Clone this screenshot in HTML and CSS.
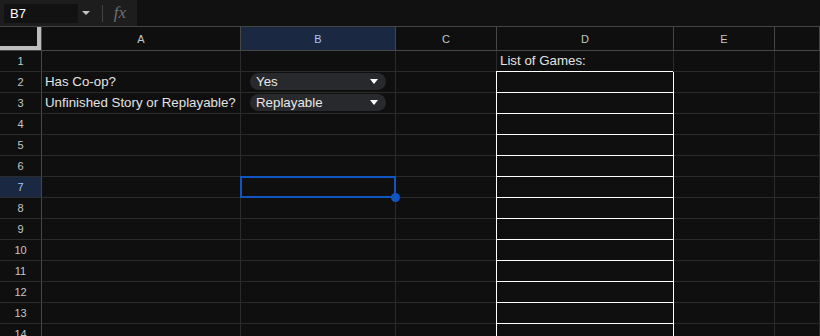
FILE: index.html
```html
<!DOCTYPE html>
<html lang="en">
<head>
    <meta charset="UTF-8">
    <meta name="viewport" content="width=device-width, initial-scale=1.0">
    <title>Sheet</title>
    <link rel="stylesheet" href="styles.css">
</head>
<body>
    <div class="fbar">
        <div class="namebox">B7</div>
        <div class="nb-arrow"></div>
        <div class="sep"></div>
        <div class="fx">fx</div>
        <div class="fedit"></div>
    </div>

    <div class="grid">
        <div class="corner"></div>
        <div class="colh">A</div>
        <div class="colh active">B</div>
        <div class="colh">C</div>
        <div class="colh">D</div>
        <div class="colh">E</div>
        <div class="colh"></div>

        <div class="rowh">1</div>
        <div class="cell"></div><div class="cell"></div><div class="cell"></div>
        <div class="cell">List of Games:</div><div class="cell"></div><div class="cell"></div>

        <div class="rowh">2</div>
        <div class="cell">Has Co-op?</div>
        <div class="cell"><div class="chip">Yes<span class="caret"></span></div></div>
        <div class="cell"></div><div class="cell list"></div><div class="cell"></div><div class="cell"></div>

        <div class="rowh">3</div>
        <div class="cell">Unfinished Story or Replayable?</div>
        <div class="cell"><div class="chip">Replayable<span class="caret"></span></div></div>
        <div class="cell"></div><div class="cell list"></div><div class="cell"></div><div class="cell"></div>

        <div class="rowh">4</div>
        <div class="cell"></div><div class="cell"></div><div class="cell"></div><div class="cell list"></div><div class="cell"></div><div class="cell"></div>
        <div class="rowh">5</div>
        <div class="cell"></div><div class="cell"></div><div class="cell"></div><div class="cell list"></div><div class="cell"></div><div class="cell"></div>
        <div class="rowh">6</div>
        <div class="cell"></div><div class="cell"></div><div class="cell"></div><div class="cell list"></div><div class="cell"></div><div class="cell"></div>
        <div class="rowh active">7</div>
        <div class="cell"></div><div class="cell selected"><span class="handle"></span></div><div class="cell"></div><div class="cell list"></div><div class="cell"></div><div class="cell"></div>
        <div class="rowh">8</div>
        <div class="cell"></div><div class="cell"></div><div class="cell"></div><div class="cell list"></div><div class="cell"></div><div class="cell"></div>
        <div class="rowh">9</div>
        <div class="cell"></div><div class="cell"></div><div class="cell"></div><div class="cell list"></div><div class="cell"></div><div class="cell"></div>
        <div class="rowh">10</div>
        <div class="cell"></div><div class="cell"></div><div class="cell"></div><div class="cell list"></div><div class="cell"></div><div class="cell"></div>
        <div class="rowh">11</div>
        <div class="cell"></div><div class="cell"></div><div class="cell"></div><div class="cell list"></div><div class="cell"></div><div class="cell"></div>
        <div class="rowh">12</div>
        <div class="cell"></div><div class="cell"></div><div class="cell"></div><div class="cell list"></div><div class="cell"></div><div class="cell"></div>
        <div class="rowh">13</div>
        <div class="cell"></div><div class="cell"></div><div class="cell"></div><div class="cell list"></div><div class="cell"></div><div class="cell"></div>
        <div class="rowh">14</div>
        <div class="cell"></div><div class="cell"></div><div class="cell"></div><div class="cell list"></div><div class="cell"></div><div class="cell"></div>
    </div>
</body>
</html>
```

FILE: styles.css
```css
html, body {
    margin: 0;
    height: 336px;
    overflow: hidden;
    background-color: #0f0f0f;
    font-family: "Liberation Sans", Arial, sans-serif;
    color: #e3e3e3;
}

/* formula bar */
.fbar {
    display: flex;
    align-items: center;
    height: 26px;
    border-bottom: 1px solid #444;
    background-color: #1d1d1e;
}
.namebox {
    box-sizing: border-box;
    width: 74px;
    height: 19px;
    margin-left: 4px;
    padding-left: 6px;
    background-color: #121212;
    color: #fff;
    font-size: 13px;
    line-height: 19px;
}
.nb-arrow {
    width: 0;
    height: 0;
    margin-left: 4px;
    border-left: 4px solid transparent;
    border-right: 4px solid transparent;
    border-top: 4px solid #c4c4c4;
}
.sep {
    width: 1px;
    height: 17px;
    margin-left: 12px;
    background-color: #444;
}
.fx {
    width: 34px;
    text-align: center;
    font-family: "Liberation Serif", serif;
    font-style: italic;
    font-size: 17px;
    color: #6f6f6f;
}
.fedit {
    flex: 1;
    align-self: stretch;
    background-color: #111;
}

/* sheet */
.grid {
    display: grid;
    grid-template-columns: 42px 199px 155px 101px 177px 101px 1fr;
    grid-template-rows: 24px;
    grid-auto-rows: 21px;
}
.grid > div {
    box-sizing: border-box;
    border-right: 1px solid #2b2b2b;
    border-bottom: 1px solid #2b2b2b;
}
.corner {
    box-shadow: inset -4px -4px 0 #bdbdbd;
}
.grid > .colh, .grid > .corner {
    border-color: #474747;
}
.colh {
    text-align: center;
    font-size: 11px;
    line-height: 24px;
    color: #c4c7c5;
}
.grid > .rowh {
    border-right-color: #474747;
    text-align: center;
    font-size: 11px;
    line-height: 21px;
    color: #c4c7c5;
}
.colh.active, .rowh.active {
    background-color: #1b2841;
    color: #a8c7fa;
}
.cell {
    position: relative;
    padding-left: 3px;
    font-size: 13.3px;
    line-height: 20px;
    white-space: nowrap;
}

.grid > .list {
    border-right-color: #fff;
    border-bottom-color: #fff;
    box-shadow: -1px -1px 0 #fff;
}

.chip {
    display: flex;
    align-items: center;
    justify-content: space-between;
    box-sizing: border-box;
    width: 136px;
    height: 17px;
    margin: 1px 0 0 6px;
    padding: 0 8px 0 6px;
    border-radius: 9px;
    background-color: #28292c;
    font-size: 13.3px;
    line-height: 17px;
    color: #e8e8e8;
}
.caret {
    width: 0;
    height: 0;
    border-left: 4px solid transparent;
    border-right: 4px solid transparent;
    border-top: 5px solid #fff;
}

.selected::after {
    content: "";
    position: absolute;
    left: -1px;
    top: -1px;
    right: -1px;
    bottom: -1px;
    border: 2px solid #1155c0;
}
.handle {
    position: absolute;
    right: -5px;
    bottom: -5px;
    width: 9px;
    height: 9px;
    border-radius: 50%;
    background-color: #1155c0;
    z-index: 2;
}
```
